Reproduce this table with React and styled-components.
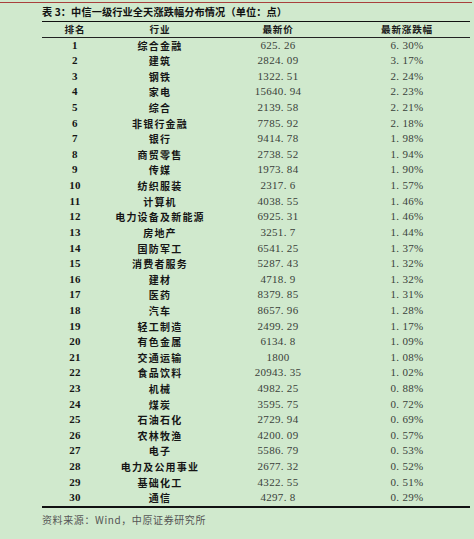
import React from "react";
import styled, { createGlobalStyle } from "styled-components";

const GlobalStyle = createGlobalStyle`
  html, body {
    margin: 0;
    padding: 0;
    background: #d0e9cd;
  }
  body {
    font-family: "Liberation Serif", "Noto Sans CJK SC", serif;
  }
`;

const Page = styled.div`
  width: 474px;
  height: 539px;
  background: #d0e9cd;
  overflow: hidden;
`;

const TopStripe = styled.div`
  margin-top: 2px;
  height: 1px;
  width: 472px;
  background: #a8403c;
`;

const Report = styled.div`
  margin-left: 42px;
  width: 428px;
`;

const Title = styled.div`
  height: 18px;
  line-height: 18px;
  font-family: "Noto Sans CJK SC", sans-serif;
  font-weight: 700;
  font-size: 10.2px;
  color: #111;
  white-space: nowrap;
  letter-spacing: 0.1px;
`;

const Grid = styled.div`
  display: grid;
  grid-template-columns: 66px 104px 132px 126px;
  grid-auto-rows: 15.62px;
  border-top: 1.6px solid #111;
  border-bottom: 2px solid #111;
`;

const HeadCell = styled.div`
  height: 15px;
  line-height: 15px;
  text-align: center;
  font-family: "Noto Sans CJK SC", sans-serif;
  font-weight: 700;
  font-size: 9.6px;
  color: #1a1a1a;
  border-bottom: 1px solid #222;
  letter-spacing: 0.8px;
`;

const Cell = styled.div`
  line-height: 15.62px;
  text-align: center;
  white-space: nowrap;
  font-size: ${p => (p.$kind === "name" ? "10px" : "11px")};
  font-weight: ${p => (p.$kind === "num" ? 400 : 700)};
  font-family: ${p =>
    p.$kind === "name"
      ? `"Noto Sans CJK SC", sans-serif`
      : `"Liberation Serif", serif`};
  color: ${p => (p.$kind === "num" ? "#3a3f3a" : "#151515")};
  letter-spacing: ${p => (p.$kind === "name" ? "1.2px" : "0.3px")};
`;

const Source = styled.div`
  margin-top: 5px;
  line-height: 14px;
  font-family: "Noto Sans CJK SC", sans-serif;
  font-size: 10px;
  color: #555;
  letter-spacing: 0.6px;
`;

const rows = [
  ["综合金融", "625.26", "6.30%"],
  ["建筑", "2824.09", "3.17%"],
  ["钢铁", "1322.51", "2.24%"],
  ["家电", "15640.94", "2.23%"],
  ["综合", "2139.58", "2.21%"],
  ["非银行金融", "7785.92", "2.18%"],
  ["银行", "9414.78", "1.98%"],
  ["商贸零售", "2738.52", "1.94%"],
  ["传媒", "1973.84", "1.90%"],
  ["纺织服装", "2317.6", "1.57%"],
  ["计算机", "4038.55", "1.46%"],
  ["电力设备及新能源", "6925.31", "1.46%"],
  ["房地产", "3251.7", "1.44%"],
  ["国防军工", "6541.25", "1.37%"],
  ["消费者服务", "5287.43", "1.32%"],
  ["建材", "4718.9", "1.32%"],
  ["医药", "8379.85", "1.31%"],
  ["汽车", "8657.96", "1.28%"],
  ["轻工制造", "2499.29", "1.17%"],
  ["有色金属", "6134.8", "1.09%"],
  ["交通运输", "1800", "1.08%"],
  ["食品饮料", "20943.35", "1.02%"],
  ["机械", "4982.25", "0.88%"],
  ["煤炭", "3595.75", "0.72%"],
  ["石油石化", "2729.94", "0.69%"],
  ["农林牧渔", "4200.09", "0.57%"],
  ["电子", "5586.79", "0.53%"],
  ["电力及公用事业", "2677.32", "0.52%"],
  ["基础化工", "4322.55", "0.51%"],
  ["通信", "4297.8", "0.29%"],
];

// CJK-style wide period, like the source document
const wide = s => s.replace(".", ". ");

export default function App() {
  return (
    <Page>
      <GlobalStyle />
      <TopStripe />
      <Report>
        <Title>表 3：中信一级行业全天涨跌幅分布情况（单位：点）</Title>
        <Grid>
          <HeadCell>排名</HeadCell>
          <HeadCell>行业</HeadCell>
          <HeadCell>最新价</HeadCell>
          <HeadCell>最新涨跌幅</HeadCell>
          {rows.map((r, i) => (
            <React.Fragment key={r[0]}>
              <Cell $kind="rank">{i + 1}</Cell>
              <Cell $kind="name">{r[0]}</Cell>
              <Cell $kind="num">{wide(r[1])}</Cell>
              <Cell $kind="num">{wide(r[2])}</Cell>
            </React.Fragment>
          ))}
        </Grid>
        <Source>资料来源：Wind，中原证券研究所</Source>
      </Report>
    </Page>
  );
}
